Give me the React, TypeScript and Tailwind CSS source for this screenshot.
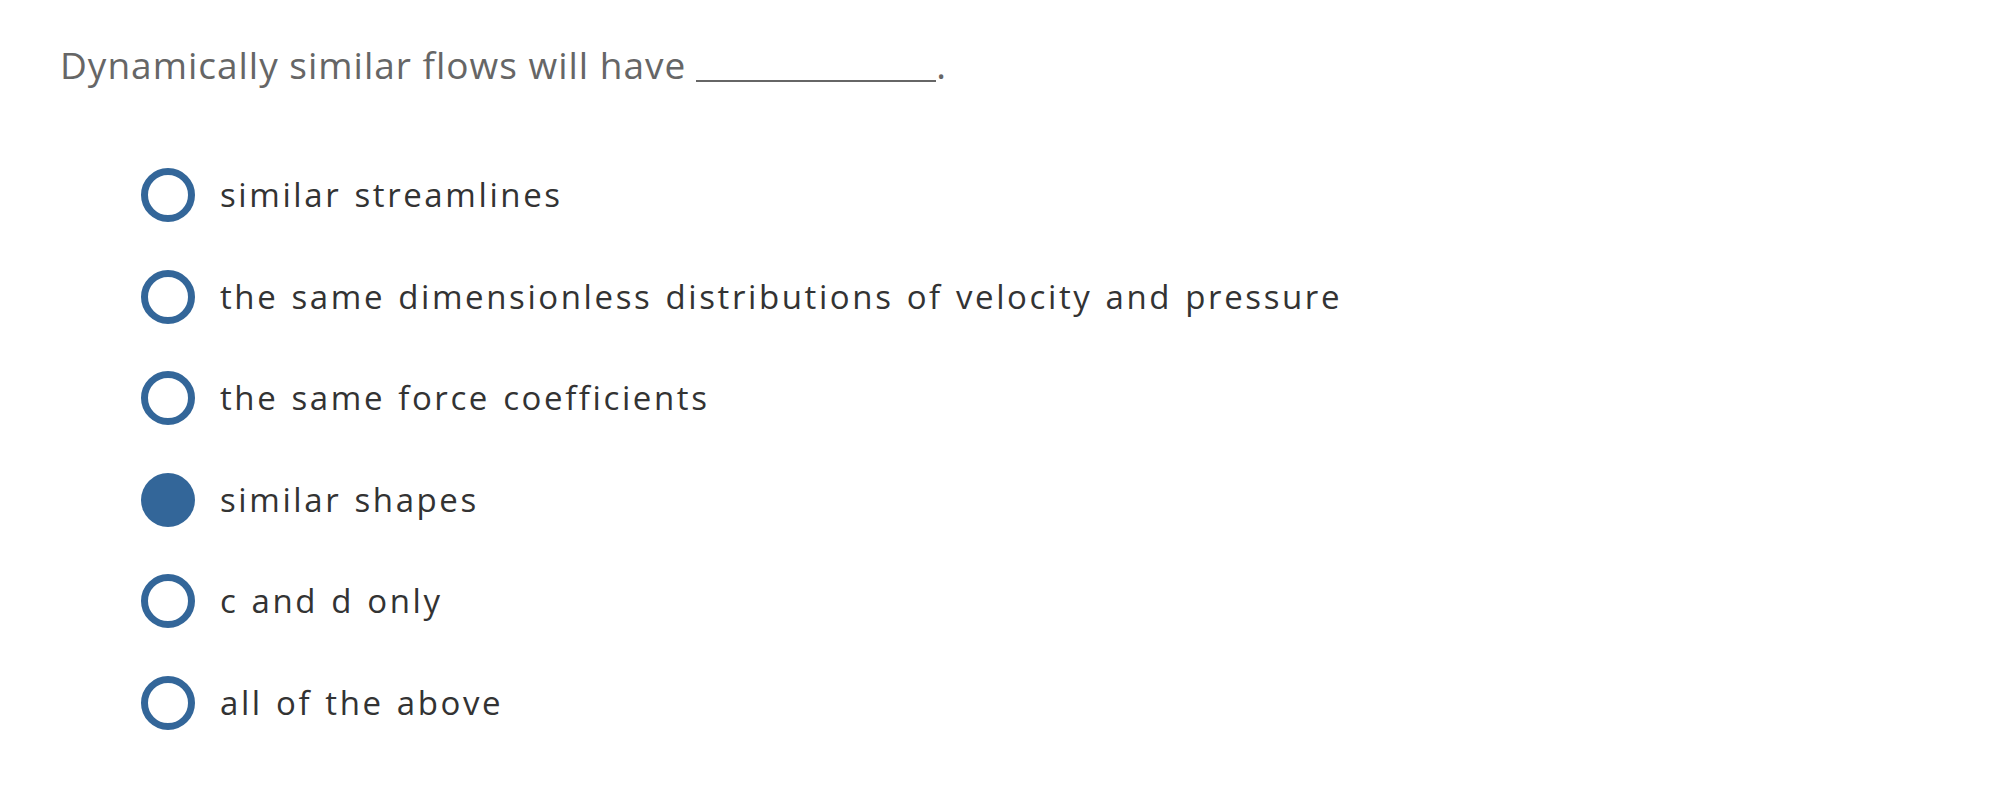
import React from "react";

const options = [
  { label: "similar streamlines", checked: false },
  { label: "the same dimensionless distributions of velocity and pressure", checked: false },
  { label: "the same force coefficients", checked: false },
  { label: "similar shapes", checked: true },
  { label: "c and d only", checked: false },
  { label: "all of the above", checked: false },
];

export default function App() {
  return (
    <div className="min-h-[800px] bg-white pl-[60px] pt-[42px] font-['Open_Sans',sans-serif]">
      <div className="flex items-baseline text-[37px] leading-[46px] tracking-[1px] text-[#666666]">
        <span>Dynamically similar flows will have</span>
        <span className="ml-[10px] inline-block w-[240px] translate-y-[3px] border-b-2 border-[#666666]"></span>
        <span>.</span>
      </div>
      <div className="mt-[80px] flex flex-col gap-[47.6px] pl-[81px]">
        {options.map((o) => (
          <div key={o.label} className="flex h-[54px] items-center">
            <span
              className={
                o.checked
                  ? "h-[54px] w-[54px] shrink-0 rounded-full bg-[#336699]"
                  : "h-[54px] w-[54px] shrink-0 rounded-full border-[7px] border-[#336699] bg-white"
              }
            ></span>
            <span className="ml-[25px] text-[33px] leading-[54px] tracking-[2.6px] [word-spacing:2px] text-[#333333]">
              {o.label}
            </span>
          </div>
        ))}
      </div>
    </div>
  );
}
